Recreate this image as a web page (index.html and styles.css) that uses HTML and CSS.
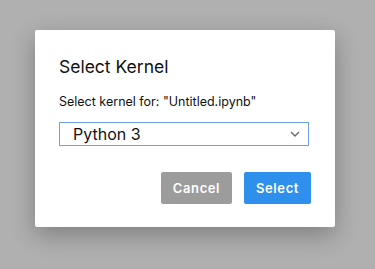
FILE: index.html
```html
<!DOCTYPE html>
<html lang="en">
<head>
  <meta charset="UTF-8" />
  <title>Select Kernel</title>
  <link rel="stylesheet" href="styles.css">
</head>
<body>
  <div class="dialog">
    <h2>Select Kernel</h2>
    <p class="label">Select kernel for: "Untitled.ipynb"</p>
    <div class="select-box">
      <span>Python 3</span>
      <svg width="10" height="6" viewBox="0 0 10 6"><path d="M1 1 L5 5 L9 1" fill="none" stroke="#666" stroke-width="1.3"/></svg>
    </div>
    <div class="actions">
      <button class="btn cancel">Cancel</button>
      <button class="btn select">Select</button>
    </div>
  </div>
</body>
</html>
```

FILE: styles.css
```css
body {
  margin: 0;
  height: 269px;
  background: #b0b0b0;
  font-family: Inter, 'Noto Sans', sans-serif;
  color: #111;
}

.dialog {
  position: absolute;
  left: 35px;
  top: 30px;
  width: 300px;
  height: 197px;
  box-sizing: border-box;
  padding: 24px 24px 0 24px;
  background: #fff;
  border-radius: 2px;
  box-shadow: 0 8px 24px rgba(0,0,0,0.28);
}

h2 {
  margin: 0;
  font-size: 17.5px;
  font-weight: 400;
  line-height: 26px;
}

.label {
  margin: 14px 0 0 0;
  font-size: 12.5px;
  line-height: 16px;
}

.select-box {
  margin-top: 12px;
  width: 250px;
  height: 24px;
  box-sizing: border-box;
  border: 1px solid #6ba3e0;
  display: flex;
  align-items: center;
  justify-content: space-between;
  padding: 0 8px 0 13px;
  font-size: 16px;
}

.actions {
  display: flex;
  justify-content: flex-end;
  gap: 12px;
  margin-top: 26px;
}

.btn {
  height: 32px;
  border: none;
  border-radius: 2px;
  color: #fff;
  font-family: Inter, 'Noto Sans', sans-serif;
  font-size: 13px;
  font-weight: 600;
  letter-spacing: 0.6px;
}

.cancel {
  width: 71px;
  background: #9c9c9c;
}

.select {
  width: 67px;
  background: #2e8fec;
}
```
